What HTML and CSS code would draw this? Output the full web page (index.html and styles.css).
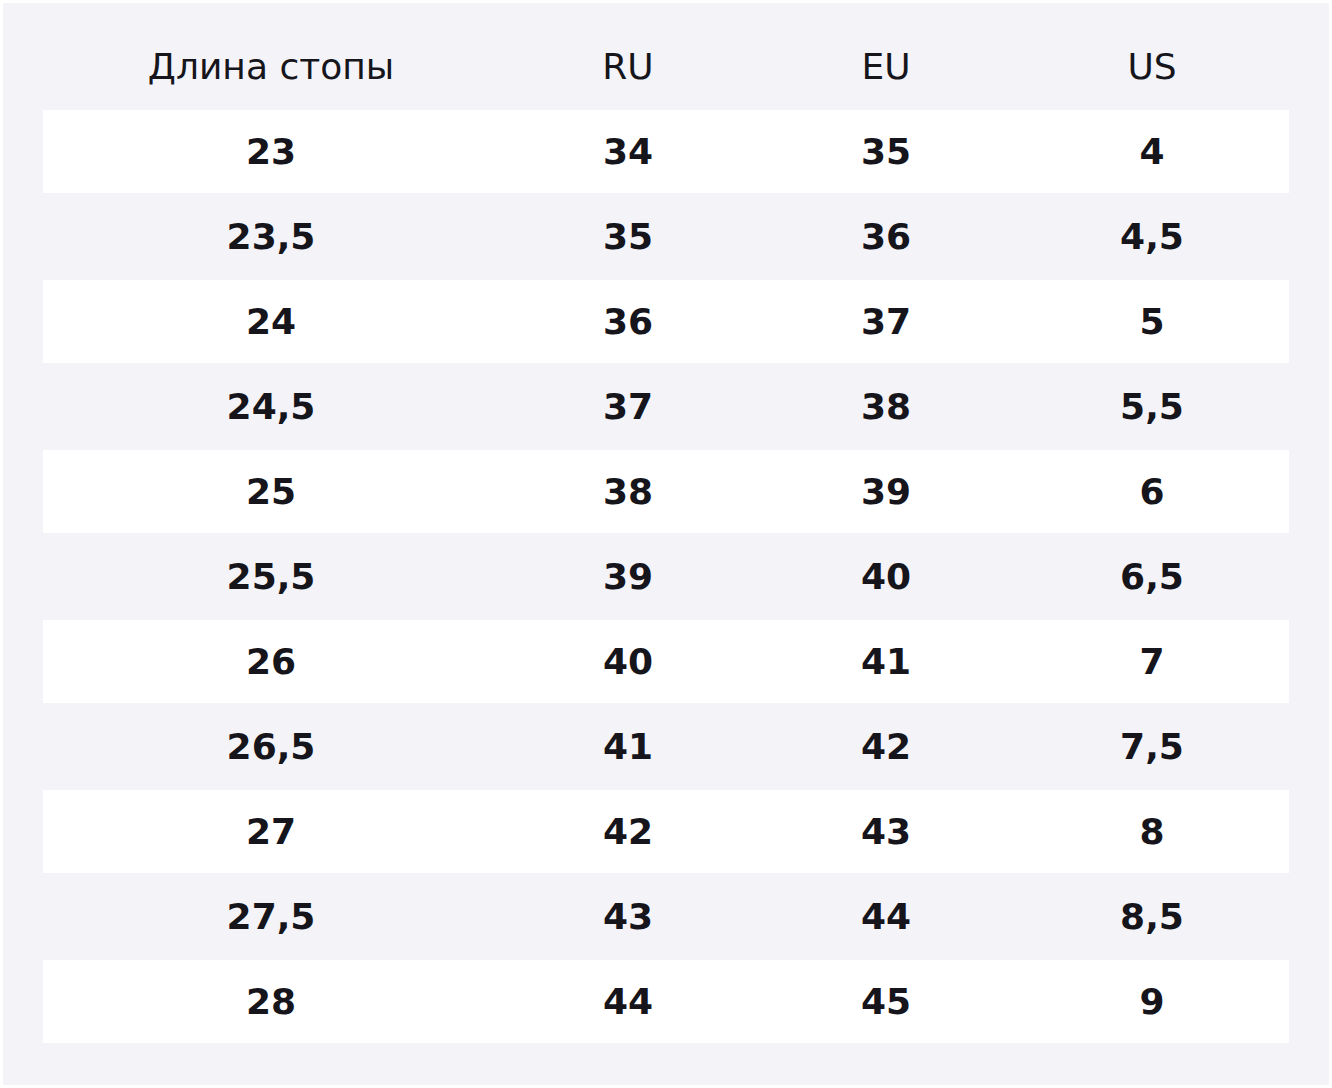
FILE: index.html
```html
<!DOCTYPE html>
<html lang="ru">
<head>
<meta charset="utf-8">
<title>Таблица размеров</title>
<link rel="stylesheet" href="styles.css">
</head>
<body>
<div class="panel">
  <table class="sizes">
    <colgroup>
      <col class="c1"><col class="c2"><col class="c3"><col class="c4">
    </colgroup>
    <thead>
      <tr><th>Длина стопы</th><th>RU</th><th>EU</th><th>US</th></tr>
    </thead>
    <tbody>
      <tr><td>23</td><td>34</td><td>35</td><td>4</td></tr>
      <tr><td>23,5</td><td>35</td><td>36</td><td>4,5</td></tr>
      <tr><td>24</td><td>36</td><td>37</td><td>5</td></tr>
      <tr><td>24,5</td><td>37</td><td>38</td><td>5,5</td></tr>
      <tr><td>25</td><td>38</td><td>39</td><td>6</td></tr>
      <tr><td>25,5</td><td>39</td><td>40</td><td>6,5</td></tr>
      <tr><td>26</td><td>40</td><td>41</td><td>7</td></tr>
      <tr><td>26,5</td><td>41</td><td>42</td><td>7,5</td></tr>
      <tr><td>27</td><td>42</td><td>43</td><td>8</td></tr>
      <tr><td>27,5</td><td>43</td><td>44</td><td>8,5</td></tr>
      <tr><td>28</td><td>44</td><td>45</td><td>9</td></tr>
    </tbody>
  </table>
</div>
</body>
</html>
```

FILE: styles.css
```css
html, body {
  margin: 0;
  padding: 0;
  background: #ffffff;
}
body {
  padding: 3px;
  font-family: "DejaVu Sans", "Noto Sans", sans-serif;
  color: #15151b;
}
.panel {
  width: 1326px;
  height: 1082px;
  box-sizing: border-box;
  background: #f4f3f8;
  padding: 20px 40px 40px 40px;
}
.sizes {
  width: 1246px;
  border-collapse: separate;
  border-spacing: 0 2px;
  table-layout: fixed;
}
.c1 { width: 456px; }
.c2 { width: 258px; }
.c3 { width: 258px; }
.c4 { width: 274px; }
.sizes th,
.sizes td {
  height: 83px;
  padding: 0;
  text-align: center;
  vertical-align: middle;
  font-size: 36px;
  line-height: 1;
}
.sizes th {
  font-weight: normal;
}
.sizes td {
  font-weight: bold;
}
.sizes tbody tr:nth-child(odd) td {
  background: #ffffff;
}
```
